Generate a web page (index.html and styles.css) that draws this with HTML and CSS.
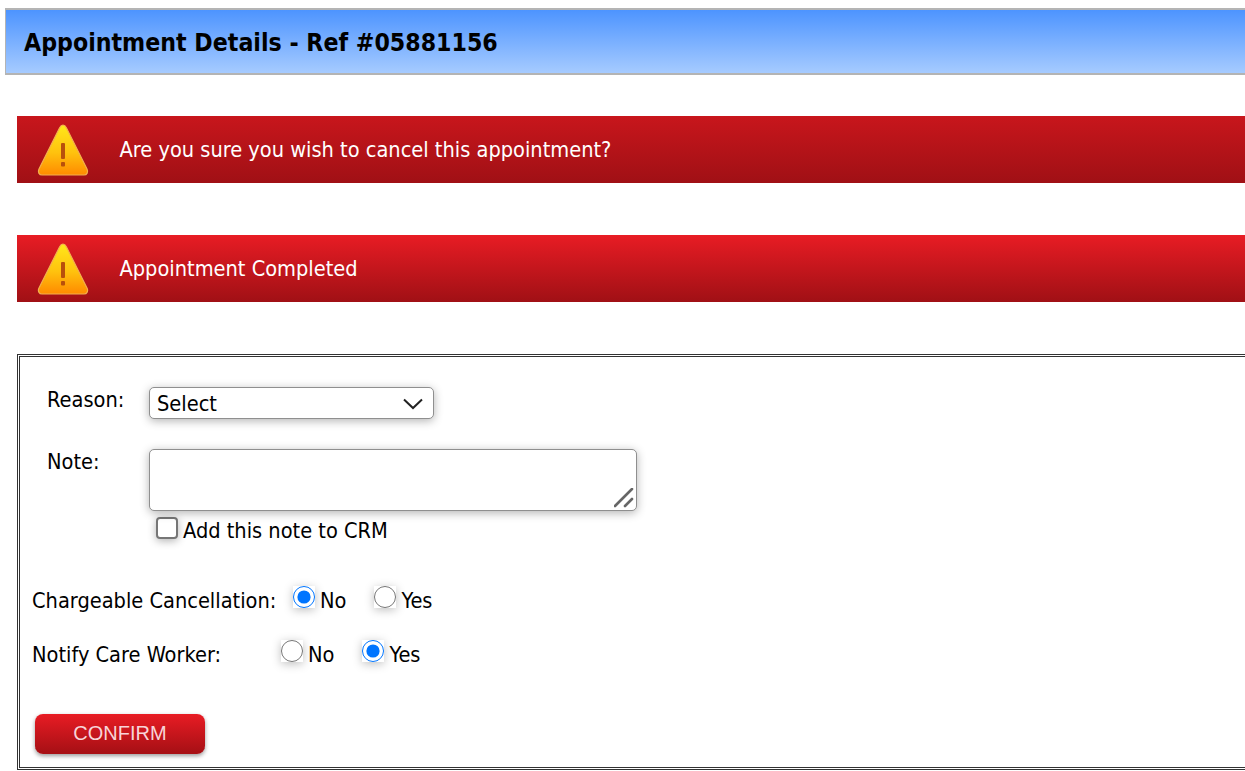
FILE: index.html
```html
<!DOCTYPE html>
<html lang="en">
<head>
    <meta charset="UTF-8">
    <meta name="viewport" content="width=device-width, initial-scale=1.0">
    <title>Appointment Details</title>
    <link rel="stylesheet" href="styles.css">
</head>
<body>
    <div class="page-header">
        <h1>Appointment Details - Ref #05881156</h1>
    </div>

    <div class="alert alert-dark">
        <svg class="alert-icon" viewBox="0 0 52 54" width="52" height="54">
            <defs>
                <linearGradient id="warnFill" x1="0" y1="0" x2="0" y2="1">
                    <stop offset="0" stop-color="#ffe81a"/>
                    <stop offset="0.55" stop-color="#ffc20e"/>
                    <stop offset="1" stop-color="#ff8a00"/>
                </linearGradient>
            </defs>
            <path d="M26 2 C27.5 2 28.5 3 29.5 5 L50 46 C51.5 49 50 52 47 52 L5 52 C2 52 .5 49 2 46 L22.5 5 C23.5 3 24.5 2 26 2 Z" fill="url(#warnFill)" stroke="#f2b04e" stroke-width="1.2"/>
            <rect x="24" y="20" width="4" height="16" rx="1" fill="#b8500c"/>
            <rect x="24" y="39" width="4" height="4.5" rx="1" fill="#b8500c"/>
        </svg>
        <span>Are you sure you wish to cancel this appointment?</span>
    </div>

    <div class="alert alert-bright">
        <svg class="alert-icon" viewBox="0 0 52 54" width="52" height="54">
            <path d="M26 2 C27.5 2 28.5 3 29.5 5 L50 46 C51.5 49 50 52 47 52 L5 52 C2 52 .5 49 2 46 L22.5 5 C23.5 3 24.5 2 26 2 Z" fill="url(#warnFill)" stroke="#f2b04e" stroke-width="1.2"/>
            <rect x="24" y="20" width="4" height="16" rx="1" fill="#b8500c"/>
            <rect x="24" y="39" width="4" height="4.5" rx="1" fill="#b8500c"/>
        </svg>
        <span>Appointment Completed</span>
    </div>

    <form class="cancel-form">
        <div class="field-row reason-row">
            <label for="reason">Reason:</label>
            <div class="select-box" id="reason">
                <span>Select</span>
                <svg viewBox="0 0 20 12" width="20" height="12"><path d="M1 1.5 L10 10 L19 1.5" fill="none" stroke="#222" stroke-width="2"/></svg>
            </div>
        </div>
        <div class="field-row note-row">
            <label for="note">Note:</label>
            <div class="note-box">
                <textarea id="note"></textarea>
                <svg class="resize-grip" viewBox="0 0 20 20" width="20" height="20">
                    <path d="M1 18 L18 1 M11 18 L18 11" stroke="#666" stroke-width="2.6" stroke-linecap="round"/>
                </svg>
            </div>
        </div>
        <div class="crm-row">
            <input type="checkbox" id="crm">
            <label for="crm">Add this note to CRM</label>
        </div>
        <div class="radio-row charge-row">
            <span class="radio-label">Chargeable Cancellation:</span>
            <input type="radio" name="charge" id="chargeNo" checked>
            <label for="chargeNo">No</label>
            <input type="radio" name="charge" id="chargeYes" class="second">
            <label for="chargeYes">Yes</label>
        </div>
        <div class="radio-row notify-row">
            <span class="radio-label">Notify Care Worker:</span>
            <input type="radio" name="notify" id="notifyNo">
            <label for="notifyNo">No</label>
            <input type="radio" name="notify" id="notifyYes" class="second" checked>
            <label for="notifyYes">Yes</label>
        </div>
        <button type="button" class="confirm-button">CONFIRM</button>
    </form>
</body>
</html>
```

FILE: styles.css
```css
html {
    overflow: hidden;
}
body {
    margin: 8px 0 0 5px;
    width: 1270px;
    font-family: "DejaVu Sans Condensed", "DejaVu Sans", sans-serif;
    font-size: 21.6px;
    color: #000;
    background-color: #fff;
}
.page-header {
    height: 62px;
    border: solid #b4b4b4;
    border-width: 2px 0 2px 1px;
    background: linear-gradient(#4d94ff, #a6cbff);
    display: flex;
    align-items: center;
    padding: 1px 0 0 18px;
}
.page-header h1 {
    margin: 0;
    font-size: 24.65px;
    font-weight: bold;
}
.alert {
    margin: 41px 0 0 12px;
    height: 67px;
    display: flex;
    align-items: center;
    color: #fff;
}
.alert + .alert {
    margin-top: 52px;
}
.alert-dark {
    background: linear-gradient(#c8161c, #a01015);
}
.alert-bright {
    background: linear-gradient(#e81c24, #a01015);
}
.alert-icon {
    margin: 0 30.5px 0 20px;
    flex-shrink: 0;
}
.cancel-form {
    margin: 52px 0 0 12px;
    height: 416px;
    box-sizing: border-box;
    border: 3px double #333;
    padding: 30px 0 0 12px;
}
.field-row {
    display: flex;
    align-items: flex-start;
    padding-left: 15px;
}
.field-row label {
    width: 102px;
}
.select-box {
    width: 285px;
    height: 32px;
    box-sizing: border-box;
    border: 1px solid #8f8f8f;
    border-radius: 5px;
    padding: 1px 10px 0 7px;
    display: flex;
    align-items: center;
    justify-content: space-between;
    box-shadow: 0 2px 10px rgba(0, 0, 0, 0.3);
    background-color: #fff;
}
.note-row {
    margin-top: 30px;
}
.note-box {
    position: relative;
    height: 62px;
}
.note-box textarea {
    display: block;
    width: 488px;
    height: 62px;
    box-sizing: border-box;
    margin: 0;
    border: 1px solid #8f8f8f;
    border-radius: 5px;
    box-shadow: 0 2px 10px rgba(0, 0, 0, 0.3);
    resize: none;
}
.resize-grip {
    position: absolute;
    right: 3px;
    bottom: 3px;
}
.crm-row {
    display: flex;
    align-items: center;
    margin: 6px 0 0 116px;
}
.crm-row input {
    appearance: none;
    width: 22px;
    height: 22px;
    box-sizing: border-box;
    margin: 0 5px 4px 8px;
    border: 2px solid #767676;
    border-radius: 4px;
    background-color: #fff;
    box-shadow: 0 2px 8px rgba(0, 0, 0, 0.3);
}
.radio-row {
    display: flex;
    align-items: center;
}
.charge-row {
    margin-top: 43px;
}
.notify-row {
    margin-top: 25px;
}
.radio-row input {
    width: 22px;
    height: 22px;
    margin: 0 5px 7px 0;
    accent-color: #0075ff;
    box-shadow: 0 2px 10px rgba(0, 0, 0, 0.25);
    border-radius: 50%;
}
.radio-row input.second {
    margin-left: 28px;
}
.charge-row .radio-label {
    width: 261px;
}
.notify-row .radio-label {
    width: 249px;
}
.confirm-button {
    display: block;
    margin: 45px 0 0 3px;
    width: 170px;
    height: 40px;
    border: none;
    border-bottom: 2px solid #a81015;
    border-radius: 8px;
    background: linear-gradient(#e81c24, #a81015);
    box-shadow: 0 2px 4px rgba(0, 0, 0, 0.4);
    color: #f8d4d8;
    font-family: "Liberation Sans", Arial, sans-serif;
    font-size: 20px;
}
```
